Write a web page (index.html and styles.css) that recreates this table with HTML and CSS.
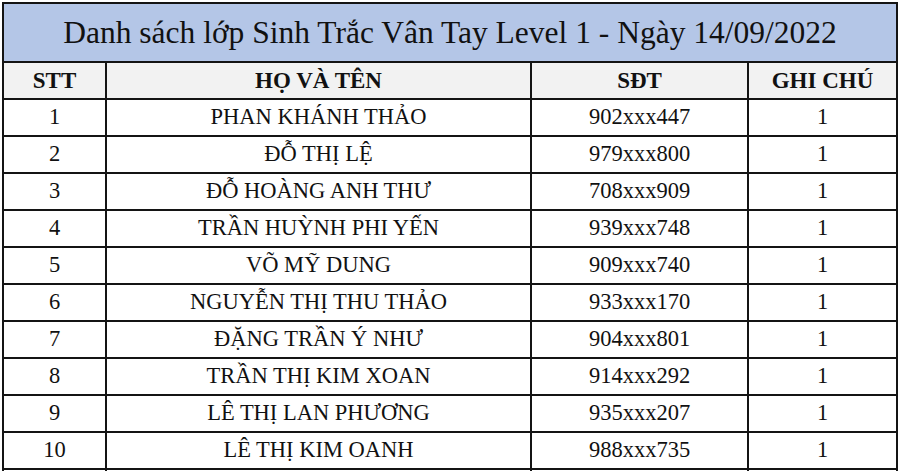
FILE: index.html
```html
<!DOCTYPE html>
<html lang="vi">
<head>
<meta charset="utf-8">
<title>Danh sách lớp</title>
<link rel="stylesheet" href="styles.css">
</head>
<body>
<table class="list">
  <colgroup>
    <col class="c-stt"><col class="c-name"><col class="c-sdt"><col class="c-note">
  </colgroup>
  <thead>
    <tr class="title"><th colspan="4">Danh sách lớp Sinh Trắc Vân Tay Level 1 - Ngày 14/09/2022</th></tr>
    <tr class="head"><th>STT</th><th>HỌ VÀ TÊN</th><th>SĐT</th><th>GHI CHÚ</th></tr>
  </thead>
  <tbody>
    <tr><td>1</td><td>PHAN KHÁNH THẢO</td><td>902xxx447</td><td>1</td></tr>
    <tr><td>2</td><td>ĐỖ THỊ LỆ</td><td>979xxx800</td><td>1</td></tr>
    <tr><td>3</td><td>ĐỖ HOÀNG ANH THƯ</td><td>708xxx909</td><td>1</td></tr>
    <tr><td>4</td><td>TRẦN HUỲNH PHI YẾN</td><td>939xxx748</td><td>1</td></tr>
    <tr><td>5</td><td>VÕ MỸ DUNG</td><td>909xxx740</td><td>1</td></tr>
    <tr><td>6</td><td>NGUYỄN THỊ THU THẢO</td><td>933xxx170</td><td>1</td></tr>
    <tr><td>7</td><td>ĐẶNG TRẦN Ý NHƯ</td><td>904xxx801</td><td>1</td></tr>
    <tr><td>8</td><td>TRẦN THỊ KIM XOAN</td><td>914xxx292</td><td>1</td></tr>
    <tr><td>9</td><td>LÊ THỊ LAN PHƯƠNG</td><td>935xxx207</td><td>1</td></tr>
    <tr><td>10</td><td>LÊ THỊ KIM OANH</td><td>988xxx735</td><td>1</td></tr>
    <tr><td>&nbsp;</td><td></td><td></td><td></td></tr>
  </tbody>
</table>
</body>
</html>
```
FILE: styles.css
```css
html, body {
  margin: 0;
  padding: 0;
  background: #ffffff;
}
body {
  height: 469px;
  overflow: hidden;
  padding: 2px 0 0 2px;
  font-family: "Liberation Serif", "Times New Roman", serif;
  color: #111111;
}
.list {
  border-collapse: collapse;
  table-layout: fixed;
  width: 894px;
}
.c-stt { width: 103px; }
.c-name { width: 425px; }
.c-sdt { width: 217px; }
.c-note { width: 149px; }
.list th, .list td {
  border: 2px solid #141414;
  text-align: center;
  padding: 0;
  height: 35px;
  font-size: 22.5px;
  font-weight: normal;
  line-height: 1;
}
.title th {
  background: #b4c6e7;
  height: 57px;
  font-size: 31.5px;
}
.head th {
  background: #f2f2f2;
  font-weight: bold;
  font-size: 23px;
}
```
